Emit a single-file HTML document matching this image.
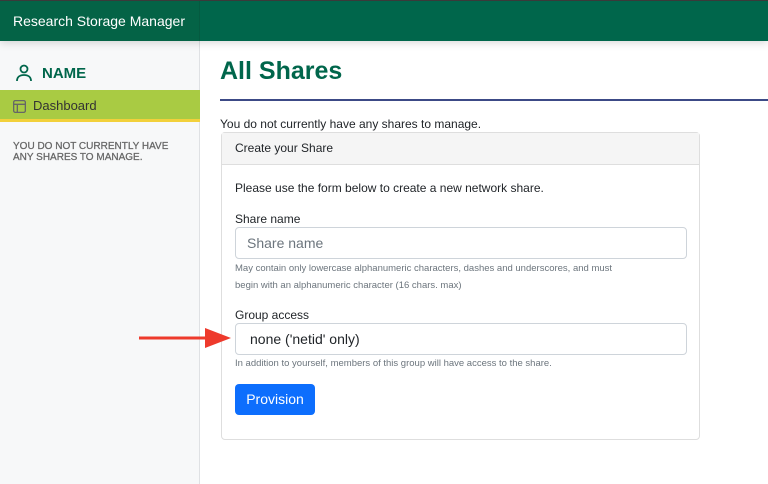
<!DOCTYPE html>
<html><head><meta charset="utf-8"><style>
*{box-sizing:border-box;margin:0;padding:0}
body{width:768px;height:484px;overflow:hidden;font-family:"Liberation Sans",sans-serif;background:#fff;position:relative;color:#212529}
.top{position:absolute;left:0;top:0;width:768px;height:41px;background:#00664b;border-top:1px solid #3a3a3a;box-shadow:0 2px 8px rgba(0,0,0,.15);z-index:2}
.brand{position:absolute;left:0;top:0;width:200px;height:40px;background:#046346;border-right:1px solid #055a40;color:#fff;font-size:14px;line-height:40px;padding-left:13px}
.side{position:absolute;left:0;top:41px;width:200px;height:443px;background:#f7f8f9;border-right:1px solid #dfe1e4}
.name{position:absolute;left:14px;top:22px;color:#00664b;font-weight:bold;font-size:15px;display:flex;align-items:center}
.dash{position:absolute;left:0;top:49px;width:200px;height:32px;background:#a9cb43;border-bottom:3px solid #f2d03b;font-size:13px;color:#333;line-height:31px;padding-left:33px}
.msg{position:absolute;left:13px;top:101px;font-size:10px;color:#666;line-height:10.5px;font-weight:500;-webkit-text-stroke:.25px #666}
h1{position:absolute;left:220px;top:57px;font-size:25px;color:#00664b;font-weight:bold}
.rule{position:absolute;left:220px;top:99px;width:548px;height:2px;background:#3c4a86}
.p1{position:absolute;left:220px;top:117px;font-size:12px}
.card{position:absolute;left:221px;top:132px;width:479px;height:308px;border:1px solid #dedede;border-radius:4px}
.ch{height:32px;background:#f5f5f5;border-bottom:1px solid #dedede;font-size:12px;line-height:31px;padding-left:13px}
.t{position:absolute;left:13px;font-size:12px}
.in{position:absolute;left:13px;width:452px;height:32px;border:1px solid #ced4da;border-radius:4px;font-size:14px;line-height:30px;padding-left:11px}
.small{position:absolute;left:13px;font-size:9.5px;color:#6c757d;line-height:16.5px}
.btn{position:absolute;left:13px;top:251px;width:80px;height:31px;background:#0d6efd;border-radius:4px;color:#fff;font-size:14px;line-height:31px;text-align:center}
</style></head><body>
<div class="top"><div class="brand">Research Storage Manager</div></div>
<div class="side">
<div class="name"><svg width="20" height="20" viewBox="0 0 20 20" fill="none" stroke="#00664b" stroke-width="1.8"><circle cx="10" cy="6" r="3.5"/><path d="M3 18c0-4 3-6 7-6s7 2 7 6"/></svg><span style="margin-left:8px">NAME</span></div>
<div class="dash"><svg style="position:absolute;left:13px;top:10px" width="13" height="13" viewBox="0 0 12 12" fill="none" stroke="#666" stroke-width="1.2"><rect x=".6" y=".6" width="10.8" height="10.8" rx="1.5"/><path d="M.6 4h10.8M4 4v7.4"/></svg>Dashboard</div>
<div class="msg">YOU DO NOT CURRENTLY HAVE<br>ANY SHARES TO MANAGE.</div>
</div>
<h1>All Shares</h1>
<div class="rule"></div>
<div class="p1">You do not currently have any shares to manage.</div>
<div class="card">
<div class="ch">Create your Share</div>
<div class="t" style="top:48px">Please use the form below to create a new network share.</div>
<div class="t" style="top:79px">Share name</div>
<div class="in" style="top:94px;color:#6c757d">Share name</div>
<div class="small" style="top:128px">May contain only lowercase alphanumeric characters, dashes and underscores, and must<br>begin with an alphanumeric character (16 chars. max)</div>
<div class="t" style="top:175px">Group access</div>
<div class="in" style="top:190px;padding-left:14px">none ('netid' only)</div>
<div class="small" style="top:223px">In addition to yourself, members of this group will have access to the share.</div>
<div class="btn">Provision</div>
</div>
<svg style="position:absolute;left:137px;top:326px" width="95" height="24" viewBox="0 0 95 24"><path d="M2 12H72" stroke="#ee3a2c" stroke-width="3"/><path d="M68 2L94 12L68 22Z" fill="#ee3a2c"/></svg>
</body></html>
